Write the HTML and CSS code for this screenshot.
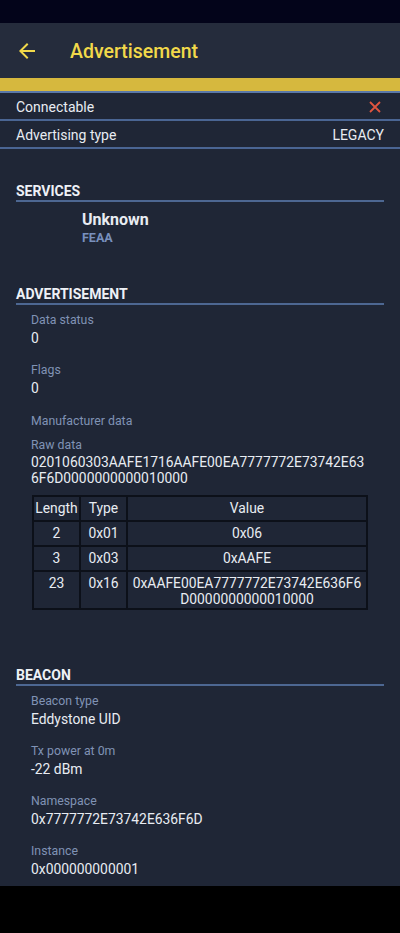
FILE: index.html
```html
<!DOCTYPE html>
<html lang="en">
<head>
    <meta charset="UTF-8">
    <meta name="viewport" content="width=device-width, initial-scale=1.0">
    <title>Advertisement</title>
    <link rel="stylesheet" href="styles.css">
</head>

<body>
    <div class="status-bar"></div>

    <div class="app-bar">
        <svg class="back" width="24" height="24" viewBox="0 0 24 24">
            <path d="M20 11H7.83l5.59-5.59L12 4l-8 8 8 8 1.41-1.41L7.83 13H20v-2z" fill="#f2d94a"/>
        </svg>
        <span class="title">Advertisement</span>
    </div>
    <div class="accent-bar"></div>

    <div class="content">
        <div class="row">
            <span>Connectable</span>
            <svg class="cross" width="14" height="14" viewBox="0 0 14 14">
                <path d="M2 2L12 12M12 2L2 12" stroke="#e0553f" stroke-width="1.8"/>
            </svg>
        </div>
        <div class="row">
            <span>Advertising type</span>
            <span>LEGACY</span>
        </div>

        <div class="section services">
            <div class="section-title">SERVICES</div>
            <div class="service">
                <div class="service-name">Unknown</div>
                <div class="service-uuid">FEAA</div>
            </div>
        </div>

        <div class="section advertisement">
            <div class="section-title">ADVERTISEMENT</div>
            <div class="item">
                <div class="label">Data status</div>
                <div class="value">0</div>
            </div>
            <div class="item">
                <div class="label">Flags</div>
                <div class="value">0</div>
            </div>
            <div class="item item-empty">
                <div class="label">Manufacturer data</div>
            </div>
            <div class="item item-raw">
                <div class="label">Raw data</div>
                <div class="value raw">0201060303AAFE1716AAFE00EA7777772E73742E636F6D0000000000010000</div>
            </div>

            <table class="ad-table">
                <colgroup>
                    <col class="col-len">
                    <col class="col-type">
                    <col>
                </colgroup>
                <tr>
                    <th>Length</th>
                    <th>Type</th>
                    <th>Value</th>
                </tr>
                <tr>
                    <td>2</td>
                    <td>0x01</td>
                    <td>0x06</td>
                </tr>
                <tr>
                    <td>3</td>
                    <td>0x03</td>
                    <td>0xAAFE</td>
                </tr>
                <tr>
                    <td>23</td>
                    <td>0x16</td>
                    <td class="raw">0xAAFE00EA7777772E73742E636F6D0000000000010000</td>
                </tr>
            </table>
        </div>

        <div class="section beacon">
            <div class="section-title">BEACON</div>
            <div class="item">
                <div class="label">Beacon type</div>
                <div class="value">Eddystone UID</div>
            </div>
            <div class="item">
                <div class="label">Tx power at 0m</div>
                <div class="value">-22 dBm</div>
            </div>
            <div class="item">
                <div class="label">Namespace</div>
                <div class="value">0x7777772E73742E636F6D</div>
            </div>
            <div class="item">
                <div class="label">Instance</div>
                <div class="value">0x000000000001</div>
            </div>
        </div>
    </div>
</body>
</html>
```

FILE: styles.css
```css
body {
    font-family: Roboto, "Noto Sans", sans-serif;
    background-color: #000000;
    color: #e8ecf2;
    margin: 0;
    width: 400px;
    height: 933px;
    overflow: hidden;
}
.status-bar {
    height: 23px;
    background-color: #03041a;
}
.app-bar {
    height: 55px;
    background-color: #252c3c;
    display: flex;
    align-items: center;
}
.back {
    margin-left: 15px;
}
.title {
    margin-left: 31px;
    padding-top: 2px;
    font-size: 19.5px;
    font-weight: 500;
    color: #f2d94a;
}
.accent-bar {
    height: 13px;
    background-color: #d6b83e;
    border-bottom: 2px solid #5b79a8;
}
.content {
    background-color: #1f2636;
    height: 793px;
}
.row {
    display: flex;
    justify-content: space-between;
    align-items: center;
    padding: 2px 16px 0;
    box-sizing: border-box;
    height: 28px;
    font-size: 14px;
    border-bottom: 2px solid #4a6593;
}
.row .cross {
    margin-right: 2px;
}
.section {
    padding: 0 16px;
}
.section-title {
    font-size: 14px;
    font-weight: 700;
    line-height: 16px;
    color: #eef1f6;
    padding-bottom: 1px;
    border-bottom: 2px solid #4d6792;
}
.services {
    padding-top: 34px;
}
.service {
    padding: 8px 0 0 66px;
}
.service-name {
    font-size: 16px;
    font-weight: 700;
    line-height: 20px;
}
.service-uuid {
    font-size: 12.5px;
    font-weight: 700;
    color: #7890bd;
    line-height: 16px;
}
.advertisement {
    padding-top: 40px;
}
.item {
    padding: 0 18px 0 15px;
    margin-top: 15px;
}
.section-title + .item {
    margin-top: 7px;
}
.item-empty {
    margin-top: 16px;
}
.item-raw {
    margin-top: 8px;
}
.label {
    font-size: 12.3px;
    color: #8093b5;
    line-height: 16px;
}
.value {
    margin-top: 1px;
    font-size: 13.85px;
    line-height: 18px;
}
.raw {
    word-break: break-all;
    line-height: 16px;
}
.ad-table {
    margin: 9px 0 0 16px;
    width: 336px;
    table-layout: fixed;
    border-collapse: collapse;
    font-size: 13.85px;
    color: #e8ecf2;
}
.ad-table th,
.ad-table td {
    border: 2px solid #0c1019;
    text-align: center;
    vertical-align: top;
    font-weight: 400;
    padding: 3px 2px;
    line-height: 17px;
}
.ad-table th {
    padding: 3px 1px;
}
.ad-table td.raw {
    line-height: 16px;
    padding: 3px 3px 1px;
}
.col-len {
    width: 47px;
}
.col-type {
    width: 47px;
}
.beacon {
    padding-top: 57px;
}
```
